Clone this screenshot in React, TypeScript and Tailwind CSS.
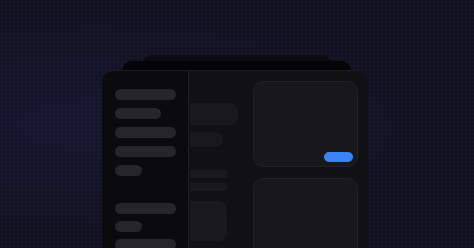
export default function App() {
  return (
    <div className="relative h-[248px] w-[474px] overflow-hidden bg-[#111120] font-['Inter',sans-serif]">
      <div className="h-full w-full bg-[radial-gradient(ellipse_at_20%_50%,rgba(40,40,100,0.22),transparent_65%)]">
        <div className="h-full w-full bg-[radial-gradient(rgba(140,140,220,0.05)_1px,transparent_1px)] bg-[length:4px_4px] pt-[55px]">
          <div className="flex flex-col items-start">
            <div className="ml-[142px] h-[20px] w-[190px] shrink-0 rounded-t-[10px] bg-[#0b0b11]" />
            <div className="-mt-[14px] ml-[122px] h-[20px] w-[229px] shrink-0 rounded-t-[10px] bg-[#050507]" />
            <div className="-mt-[11px] ml-[102px] flex h-[190px] w-[266px] shrink-0 overflow-hidden rounded-t-[12px] border-t border-[#1c1c20] bg-[#111113]">
              <Sidebar />
              <Content />
            </div>
          </div>
        </div>
      </div>
    </div>
  );
}

function Pill({ w }: { w: string }) {
  return <div className={`h-[11px] shrink-0 rounded-full bg-[#262629] ${w}`} />;
}

function Sidebar() {
  return (
    <div className="flex w-[87px] shrink-0 flex-col border-r border-[#1e1e21] bg-[#0b0b0d] pl-[13px] pt-[18px]">
      <div className="flex flex-col gap-[8px]">
        <Pill w="w-[61px]" />
        <Pill w="w-[46px]" />
        <Pill w="w-[61px]" />
        <Pill w="w-[61px]" />
        <Pill w="w-[27px]" />
      </div>
      <div className="mt-[27px] flex flex-col gap-[7px]">
        <Pill w="w-[61px]" />
        <Pill w="w-[27px]" />
        <Pill w="w-[61px]" />
      </div>
    </div>
  );
}

function Content() {
  return (
    <div className="flex flex-1 pl-px">
      <div className="flex w-[50px] shrink-0 flex-col overflow-hidden pt-[32px]">
        <div className="-ml-[8px] h-[22px] w-[56px] shrink-0 rounded-[8px] bg-[#19191c]" />
        <div className="-ml-[8px] mt-[7px] h-[15px] w-[41px] shrink-0 rounded-full bg-[#19191c]" />
        <div className="-ml-[8px] mt-[23px] h-[8px] w-[46px] shrink-0 rounded-full bg-[#19191c]" />
        <div className="-ml-[8px] mt-[5px] h-[8px] w-[46px] shrink-0 rounded-full bg-[#19191c]" />
        <div className="-ml-[8px] mt-[10px] h-[40px] w-[45px] shrink-0 rounded-[8px] bg-[#19191c]" />
      </div>
      <div className="ml-[13px] flex w-[105px] shrink-0 flex-col gap-[11px] pt-[10px]">
        <div className="flex h-[86px] shrink-0 flex-col items-end justify-end rounded-[10px] border border-[#222225] bg-[#18181b] p-[4px]">
          <div className="h-[10px] w-[29px] rounded-full bg-[#3b82f6]" />
        </div>
        <div className="h-[90px] shrink-0 rounded-[10px] border border-[#222225] bg-[#18181b]" />
      </div>
    </div>
  );
}
